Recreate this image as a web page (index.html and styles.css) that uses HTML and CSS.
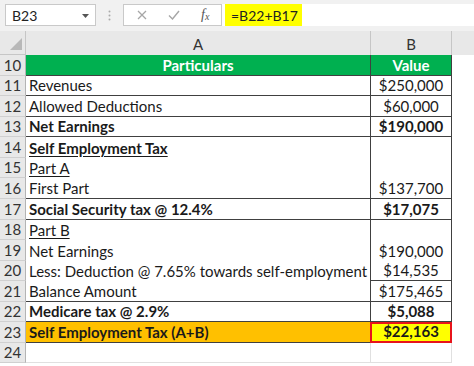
FILE: index.html
```html
<!DOCTYPE html>
<html>
<head>
<meta charset="utf-8">
<link rel="stylesheet" href="styles.css">
</head>
<body>
<div class="fbar">
  <div class="namebox"><span>B23</span>
    <svg class="caret" width="7" height="4" viewBox="0 0 7 4"><path d="M0 0H7L3.5 4Z" fill="#555"/></svg>
  </div>
  <div class="grip">
    <svg width="3" height="11" viewBox="0 0 3 11"><circle cx="1.5" cy="1.5" r="1" fill="#aaa"/><circle cx="1.5" cy="5.5" r="1" fill="#aaa"/><circle cx="1.5" cy="9.5" r="1" fill="#aaa"/></svg>
  </div>
  <div class="fnbox">
    <svg class="ico" width="10" height="10" viewBox="0 0 10 10"><path d="M1 1L9 9M9 1L1 9" stroke="#a6a6a6" stroke-width="1.3" fill="none"/></svg>
    <svg class="ico" width="12" height="10" viewBox="0 0 12 10"><path d="M1 5.5L4.5 9L11 1" stroke="#a6a6a6" stroke-width="1.4" fill="none"/></svg>
    <span class="fx">f<sub>x</sub></span>
  </div>
  <div class="formula"><span class="hl">=B22+B17</span></div>
</div>
<div class="grid">
  <div class="corner"><svg width="12" height="12" viewBox="0 0 12 12"><path d="M0 12H12V0Z" fill="#b8b8b8"/></svg></div>
  <div class="ch">A</div>
  <div class="ch">B</div>
  <div class="ch last"></div>

  <div class="rh">10</div>
  <div class="c hd">Particulars</div>
  <div class="c hd v">Value</div>
  <div class="e"></div>

  <div class="rh">11</div>
  <div class="c bb">Revenues</div>
  <div class="c v bb">$250,000</div>
  <div class="e"></div>

  <div class="rh">12</div>
  <div class="c bb">Allowed Deductions</div>
  <div class="c v bb">$60,000</div>
  <div class="e"></div>

  <div class="rh">13</div>
  <div class="c bb b">Net Earnings</div>
  <div class="c v bb b">$190,000</div>
  <div class="e"></div>

  <div class="rh">14</div>
  <div class="c b"><u>Self Employment Tax</u></div>
  <div class="c v"></div>
  <div class="e"></div>

  <div class="rh">15</div>
  <div class="c"><u>Part A</u></div>
  <div class="c v"></div>
  <div class="e"></div>

  <div class="rh">16</div>
  <div class="c bb">First Part</div>
  <div class="c v bb">$137,700</div>
  <div class="e"></div>

  <div class="rh">17</div>
  <div class="c bb b">Social Security tax @ 12.4%</div>
  <div class="c v bb b">$17,075</div>
  <div class="e"></div>

  <div class="rh">18</div>
  <div class="c"><u>Part B</u></div>
  <div class="c v"></div>
  <div class="e"></div>

  <div class="rh">19</div>
  <div class="c">Net Earnings</div>
  <div class="c v">$190,000</div>
  <div class="e"></div>

  <div class="rh">20</div>
  <div class="c">Less: Deduction @ 7.65% towards self-employment</div>
  <div class="c v bb">$14,535</div>
  <div class="e"></div>

  <div class="rh">21</div>
  <div class="c bb">Balance Amount</div>
  <div class="c v bb">$175,465</div>
  <div class="e"></div>

  <div class="rh">22</div>
  <div class="c bb b">Medicare tax @ 2.9%</div>
  <div class="c v bb b">$5,088</div>
  <div class="e"></div>

  <div class="rh">23</div>
  <div class="c bb b tot">Self Employment Tax (A+B)</div>
  <div class="c v b sel">$22,163</div>
  <div class="e"></div>

  <div class="rh">24</div>
  <div class="c blank"></div>
  <div class="c blank v"></div>
  <div class="e"></div>
</div>
</body>
</html>
```

FILE: styles.css
```css
html, body {
  margin: 0;
  padding: 0;
  background: #ffffff;
}
body {
  width: 474px;
  height: 366px;
  overflow: hidden;
  font-family: Lato, "Open Sans", sans-serif;
  color: #1a1a1a;
}
.fbar {
  height: 31px;
  box-sizing: border-box;
  background: #f1f1f1;
  display: flex;
  align-items: flex-start;
  padding: 4px 0 0 5px;
}
.namebox {
  width: 91px;
  height: 22px;
  box-sizing: border-box;
  border: 1px solid #c9c9c9;
  background: #fff;
  display: flex;
  align-items: center;
  justify-content: space-between;
  padding: 0 6px 0 6px;
  font-size: 14px;
  color: #222;
}
.caret { margin-top: 1px; }
.grip {
  width: 27px;
  height: 22px;
  display: flex;
  align-items: center;
  justify-content: center;
}
.fnbox {
  width: 99px;
  height: 22px;
  box-sizing: border-box;
  border: 1px solid #c9c9c9;
  background: #fff;
  display: flex;
  align-items: center;
  padding: 0 0 0 13px;
  gap: 21px;
}
.fx {
  font-family: "Liberation Serif", serif;
  font-style: italic;
  font-size: 14px;
  color: #555;
  line-height: 1;
}
.fx sub { font-size: 10px; vertical-align: -1px; }
.formula {
  flex: 1;
  height: 22px;
  background: #fff;
  padding-left: 3px;
  display: flex;
}
.hl {
  background: #ffff00;
  width: 77px;
  box-sizing: border-box;
  padding-left: 6px;
  font-size: 14px;
  color: #222;
  display: flex;
  align-items: center;
}
.grid {
  display: grid;
  grid-template-columns: 26px 345px 81px 22px;
  grid-template-rows: 24px repeat(15, 20.57px);
}
.corner, .ch, .rh {
  background: #e8e8e8;
  box-sizing: border-box;
}
.corner {
  border-right: 1px solid #c6c6c6;
  border-bottom: 1px solid #c6c6c6;
  display: flex;
  align-items: flex-end;
  justify-content: flex-end;
  padding: 0 3px 4px 0;
}
.ch {
  border-right: 1px solid #c6c6c6;
  display: flex;
  align-items: flex-end;
  justify-content: center;
  padding-bottom: 2px;
  font-size: 15px;
  color: #333;
}
.ch.last { border-right: none; }
.rh {
  border-right: 1px solid #b4b4b4;
  border-bottom: 1px solid #d0d0d0;
  display: flex;
  align-items: flex-end;
  justify-content: center;
  padding-bottom: 1px;
  font-size: 15px;
  color: #333;
}
.c {
  box-sizing: border-box;
  border-right: 1px solid #404040;
  display: flex;
  align-items: flex-end;
  padding: 0 0 1px 3px;
  font-size: 15px;
  white-space: nowrap;
  background: #fff;
  color: #1a1a1a;
}
.c.v {
  justify-content: center;
  padding-left: 0;
}
.bb { border-bottom: 1px solid #404040; }
.b { font-weight: bold; }
u { text-underline-offset: 2px; }
.hd {
  background: #00b050;
  color: #fff;
  font-weight: bold;
  justify-content: center;
  padding-left: 0;
  border-bottom: 1px solid #404040;
}
.tot { background: #ffc000; }
.sel {
  background: #ffff00;
  border: 2px solid #e8141b;
  margin-left: -1px;
}
.blank {
  border-right: 1px solid #e0e0e0;
  border-bottom: 1px solid #e0e0e0;
}
.e { background: #fff; }
```
